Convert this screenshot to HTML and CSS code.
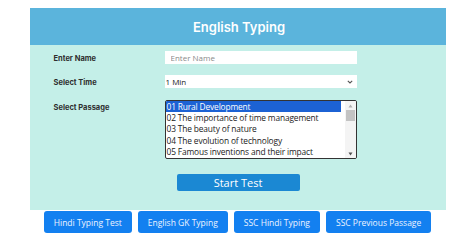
FILE: index.html
```html
<!DOCTYPE html>
<html lang="en">
<head>
  <meta charset="UTF-8">
  <title>English Typing</title>
  <link rel="stylesheet" href="styles.css">
</head>
<body>
<main>

  <div class="typing-card">
    <div class="card-header">English Typing</div>

    <form class="typing-form">
      <div class="form-row">
        <label for="user-name">Enter Name</label>
        <input type="text" id="user-name" placeholder="Enter Name">
      </div>

      <div class="form-row">
        <label for="test-time">Select Time</label>
        <div class="time-select">
          <select id="test-time">
            <option>1 Min</option>
            <option>2 Min</option>
            <option>5 Min</option>
            <option>10 Min</option>
          </select>
          <svg class="chevron" width="6" height="4" viewBox="0 0 6 4">
            <path d="M0.8 0.8 L3 3 L5.2 0.8" fill="none" stroke="#555" stroke-width="1.1"/>
          </svg>
        </div>
      </div>

      <div class="form-row">
        <label>Select Passage</label>
        <div class="passage-box">
          <div class="passage-list" role="listbox">
            <div class="passage-item selected">01 Rural Development</div>
            <div class="passage-item">02 The importance of time management</div>
            <div class="passage-item">03 The beauty of nature</div>
            <div class="passage-item">04 The evolution of technology</div>
            <div class="passage-item">05 Famous inventions and their impact</div>
          </div>
          <div class="list-scrollbar">
            <svg width="5" height="4" viewBox="0 0 5 4"><path d="M0.5 3.5 L2.5 0.5 L4.5 3.5 Z" fill="#b0b0b0"/></svg>
            <div class="scroll-thumb"></div>
            <div class="scroll-track"></div>
            <svg width="5" height="4" viewBox="0 0 5 4"><path d="M0.5 0.5 L4.5 0.5 L2.5 3.5 Z" fill="#505050"/></svg>
          </div>
        </div>
      </div>

      <button type="button" class="start-test">Start Test</button>
    </form>
  </div>

  <div class="more-links">
    <a href="#" class="link-button">Hindi Typing Test</a>
    <a href="#" class="link-button">English GK Typing</a>
    <a href="#" class="link-button">SSC Hindi Typing</a>
    <a href="#" class="link-button">SSC Previous Passage</a>
  </div>

</main>
</body>
</html>
```

FILE: styles.css
```css
body {
  margin: 0;
  background-color: white;
  font-family: "Open Sans", sans-serif;
}

main {
  display: flex;
  flex-direction: column;
  align-items: center;
  padding-top: 8px;
  padding-left: 1px;
}

.typing-card {
  width: 416px;
  background-color: #c4efe8;
}

.card-header {
  height: 37px;
  display: flex;
  justify-content: center;
  align-items: center;
  background-color: #5bb4dc;
  color: white;
  font-family: Inter, sans-serif;
  font-size: 13px;
  font-weight: 600;
  padding-left: 3px;
}

.typing-form {
  display: flex;
  flex-direction: column;
  padding: 6px 0 19px 23px;
}

.form-row {
  display: grid;
  grid-template-columns: 112px 192px;
  align-items: start;
  margin-bottom: 11px;
}

.form-row:nth-of-type(2) {
  margin-bottom: 12px;
}

.form-row label {
  font-family: Inter, sans-serif;
  font-size: 7.5px;
  font-weight: 700;
  color: #2e2e2e;
  padding: 3px 0 0 1px;
}

.form-row input,
#test-time {
  width: 100%;
  height: 13px;
  box-sizing: border-box;
  border: none;
  border-radius: 0;
  background-color: white;
  padding: 0 6px;
  font-family: "Open Sans", sans-serif;
  font-size: 8px;
  color: #222;
  outline: none;
}

.form-row input::placeholder {
  color: #8a8a8a;
}

.time-select {
  display: flex;
  align-items: center;
  background-color: white;
}

#test-time {
  appearance: none;
  padding: 0 1px;
}

.chevron {
  margin: 0 4px 0 -10px;
}

.passage-box {
  height: 59px;
  box-sizing: border-box;
  display: flex;
  border: 1px solid #333;
  border-radius: 2px;
  overflow: hidden;
  background-color: white;
}

.passage-list {
  flex: 1;
  margin-right: 4px;
  font-family: "Open Sans", sans-serif;
  font-size: 8.4px;
  letter-spacing: -0.15px;
  color: #222;
}

.passage-item {
  height: 11.2px;
  line-height: 11.2px;
  padding-left: 1px;
  white-space: nowrap;
  cursor: default;
}

.passage-item.selected {
  background-color: #1c62d4;
  color: white;
}

.list-scrollbar {
  width: 11px;
  display: flex;
  flex-direction: column;
  align-items: center;
  background-color: #f4f4f4;
  padding: 3px 0 2px;
  box-sizing: border-box;
}

.scroll-thumb {
  width: 9px;
  height: 11px;
  margin-top: 2px;
  background-color: #c3c3c3;
}

.scroll-track {
  flex: 1;
}

.start-test {
  align-self: flex-start;
  margin: 4px 0 0 124px;
  width: 123px;
  height: 17px;
  border: none;
  border-radius: 2px;
  background-color: #1b88d3;
  color: white;
  font-family: "Open Sans", sans-serif;
  font-size: 11px;
  padding: 0;
  cursor: pointer;
}

.more-links {
  display: flex;
  gap: 6px;
  margin-top: 1px;
}

.link-button {
  height: 22px;
  display: flex;
  align-items: center;
  padding: 0 10px;
  border-radius: 3px;
  background-color: #1380f0;
  color: #eef4ff;
  font-size: 8.5px;
  text-decoration: none;
}
```
